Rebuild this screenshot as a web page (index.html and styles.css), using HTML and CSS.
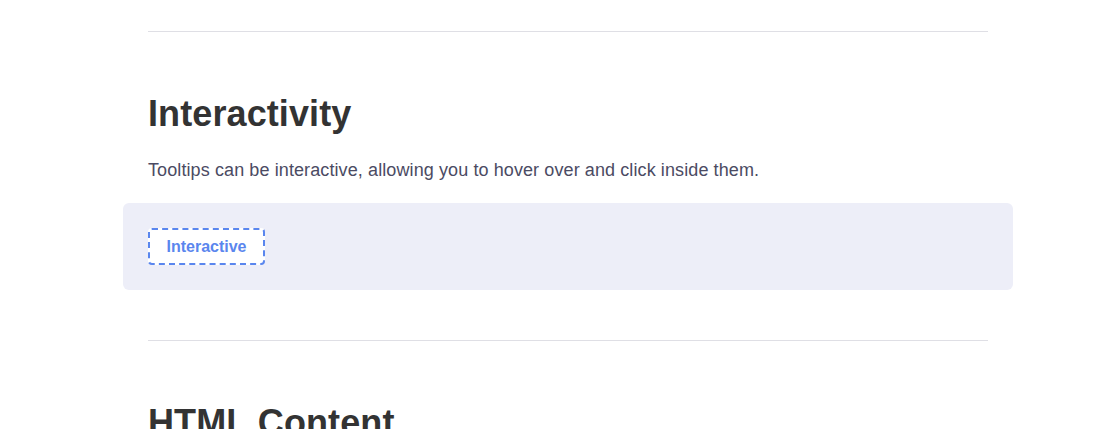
FILE: index.html
```html
<!DOCTYPE html>
<html lang="en">
<head>
<meta charset="utf-8">
<title>Interactivity</title>
<link rel="stylesheet" href="styles.css">
</head>
<body>
<main class="content">
  <hr class="divider first">
  <section class="section">
    <h2 class="title">Interactivity</h2>
    <p class="lead">Tooltips can be interactive, allowing you to hover over and click inside them.</p>
    <div class="demo">
      <button class="btn-dashed" type="button">Interactive</button>
    </div>
  </section>
  <hr class="divider">
  <section class="section">
    <h2 class="title">HTML Content</h2>
  </section>
</main>
</body>
</html>
```
FILE: styles.css
```css
html, body {
  margin: 0;
  padding: 0;
  background: #ffffff;
}
body {
  font-family: "Liberation Sans", Arial, Helvetica, sans-serif;
  color: #333333;
  overflow: hidden;
  height: 429px;
}
.content {
  width: 840px;
  margin-left: 148px;
}
.divider {
  border: 0;
  height: 1px;
  background: #dfdfe5;
  margin: 0;
}
.divider.first {
  margin-top: 31px;
}
.section {
  padding-top: 60px;
  padding-bottom: 50px;
}
.title {
  font-size: 36px;
  line-height: 44px;
  font-weight: 700;
  color: #333333;
  letter-spacing: 0.1px;
  margin: 0 0 20px 0;
}
.lead {
  font-size: 18px;
  line-height: 28px;
  letter-spacing: 0.1px;
  color: #4b4b63;
  margin: 0 0 19px 0;
}
.demo {
  margin: 0 -25px;
  padding: 25px;
  background: #edeef8;
  border-radius: 6px;
  display: flex;
  align-items: center;
}
.btn-dashed {
  font-family: "Liberation Sans", Arial, Helvetica, sans-serif;
  font-size: 16px;
  font-weight: 700;
  line-height: 17px;
  color: #5a86ee;
  background: #ffffff;
  border: 2px dashed #5a86ee;
  border-radius: 4px;
  padding: 8px 16px;
  width: 117px;
  height: 37px;
  cursor: pointer;
}
```
